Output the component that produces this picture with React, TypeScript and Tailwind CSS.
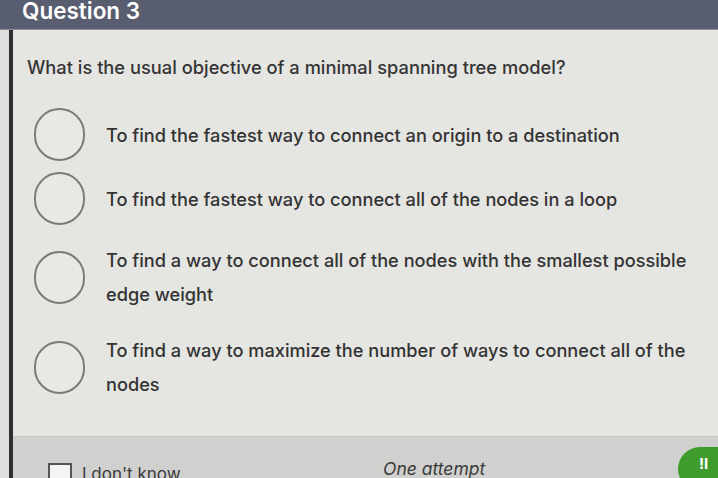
import React from "react";

const options = [
  { text: "To find the fastest way to connect an origin to a destination", mt: "mt-0" },
  { text: "To find the fastest way to connect all of the nodes in a loop", mt: "mt-[11px]" },
  {
    text: "To find a way to connect all of the nodes with the smallest possible edge weight",
    mt: "mt-[18px]",
  },
  {
    text: "To find a way to maximize the number of ways to connect all of the nodes",
    mt: "mt-[22px]",
  },
];

export default function App() {
  return (
    <div className="w-[718px] h-[478px] overflow-hidden flex flex-col bg-[#dcdcda] font-['Inter',sans-serif]">
      {/* Header */}
      <div className="h-[30px] shrink-0 bg-[#585d6f] px-[22px] flex items-start border-b border-[#8c8f98]">
        <h1 className="text-white font-semibold text-[22.5px] leading-[26px] -mt-[2px]">Question 3</h1>
      </div>

      <div className="flex-1 flex min-h-0">
        {/* Left edge */}
        <div className="w-[9px] shrink-0 bg-[#dededc]" />
        <div className="w-[4px] shrink-0 bg-[#2e2f33]" />

        <div className="flex-1 flex flex-col min-w-0">
          {/* Body */}
          <div className="h-[406px] shrink-0 bg-[#e5e5e2] pt-[24px]">
            <p className="pl-[14px] text-[18.3px] leading-[26px] font-medium text-[#353535]">
              What is the usual objective of a minimal spanning tree model?
            </p>

            <div className="mt-[28px] pl-[21px] flex flex-col">
              {options.map((o) => (
                <div key={o.text} className={`flex items-center gap-[21px] ${o.mt}`}>
                  <div className="w-[51px] h-[53px] shrink-0 rounded-full border-2 border-[#7b7b7b] bg-[#e8e8e5]" />
                  <span className="max-w-[590px] text-[18.2px] leading-[34px] font-medium text-[#333]">
                    {o.text}
                  </span>
                </div>
              ))}
            </div>
          </div>

          {/* Footer */}
          <div className="relative flex-1 bg-[#d0d0ce] border-t border-[#c4c4c2]">
            <div className="absolute left-[35px] top-[25px] flex items-center gap-[10px]">
              <div className="w-[24px] h-[24px] bg-[#f4f4f2] border-2 border-[#555]" />
              <span className="text-[17px] text-[#3a3a3a]">I don't know</span>
            </div>
            <span className="absolute left-[370px] top-[19px] text-[17.5px] italic text-[#3a3a3a]">
              One attempt
            </span>
            <div className="absolute left-[665px] top-[10px] w-[80px] h-[44px] rounded-full bg-[#3f9b2c] flex items-start pl-[21px] pt-[9px]">
              <span className="text-white font-bold text-[15px] leading-none">!I</span>
            </div>
          </div>
        </div>
      </div>
    </div>
  );
}
